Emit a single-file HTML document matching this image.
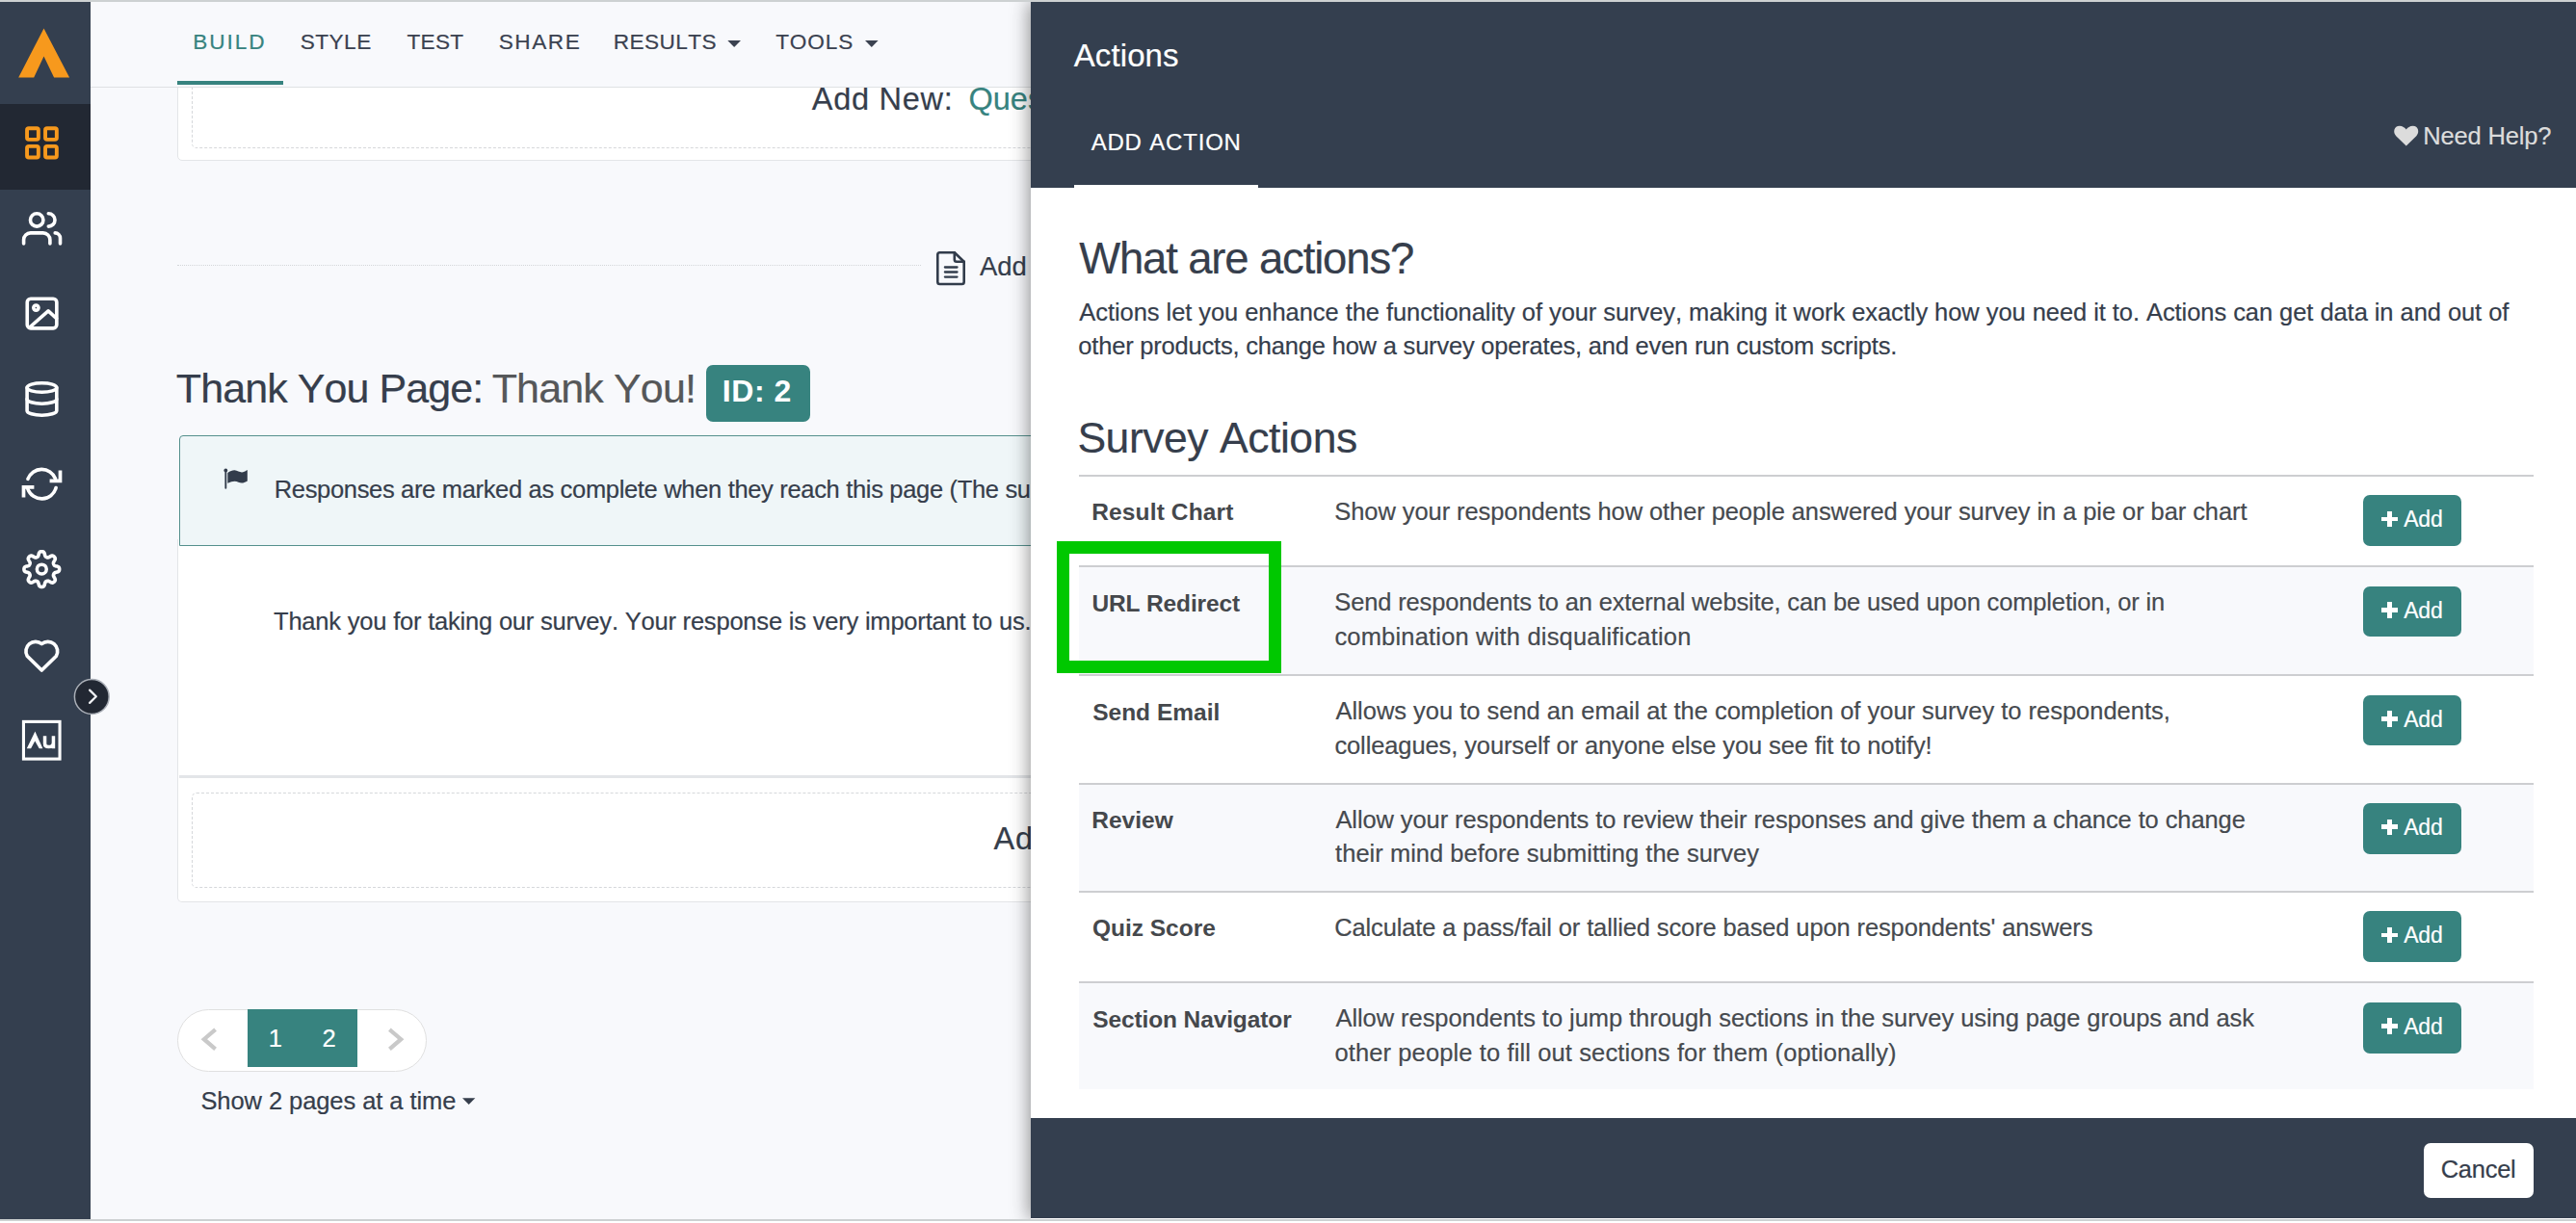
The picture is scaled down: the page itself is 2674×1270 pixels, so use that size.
<!DOCTYPE html>
<html><head><meta charset="utf-8"><style>
html,body{margin:0;padding:0}
body{width:2674px;height:1270px;position:relative;overflow:hidden;background:#f8f9fc;font-family:"Liberation Sans",sans-serif}
.t{position:absolute;white-space:nowrap;font-kerning:none}
</style></head><body>
<div style="position:absolute;left:184px;top:40px;width:1000px;height:127px;background:#fff;border:1.5px solid #e3e5e8;border-radius:5px;box-sizing:border-box"></div><div style="position:absolute;left:199px;top:40px;width:980px;height:114px;border:1.5px dashed #d6d8db;border-radius:5px;box-sizing:border-box"></div><div class="t" style="left:842.74px;top:84.03px;font-size:32.5px;line-height:39px;font-weight:400;color:#363e4c;letter-spacing:0.733px;-webkit-text-stroke:0.2px #363e4c;">Add New:</div><div class="t" style="left:1005.46px;top:84.03px;font-size:32.5px;line-height:39px;font-weight:400;color:#37837f;letter-spacing:0.000px;-webkit-text-stroke:0.2px #37837f;">Ques</div><div style="position:absolute;left:94px;top:2px;width:1000px;height:88px;background:#f8f9fc"></div><div style="position:absolute;left:94px;top:89.5px;width:1000px;height:1.5px;background:#dfe1e4"></div><div style="position:absolute;left:183.7px;top:83.6px;width:110.3px;height:4.7px;background:#37837f"></div><div class="t" style="left:200.15px;top:29.67px;font-size:22.6px;line-height:27px;font-weight:400;color:#37837f;letter-spacing:1.943px;-webkit-text-stroke:0.2px #37837f;">BUILD</div><div class="t" style="left:311.67px;top:29.67px;font-size:22.6px;line-height:27px;font-weight:400;color:#3b4250;letter-spacing:0.500px;-webkit-text-stroke:0.2px #3b4250;">STYLE</div><div class="t" style="left:422.39px;top:29.67px;font-size:22.6px;line-height:27px;font-weight:400;color:#3b4250;letter-spacing:0.323px;-webkit-text-stroke:0.2px #3b4250;">TEST</div><div class="t" style="left:517.77px;top:29.67px;font-size:22.6px;line-height:27px;font-weight:400;color:#3b4250;letter-spacing:1.533px;-webkit-text-stroke:0.2px #3b4250;">SHARE</div><div class="t" style="left:636.85px;top:29.67px;font-size:22.6px;line-height:27px;font-weight:400;color:#3b4250;letter-spacing:0.409px;-webkit-text-stroke:0.2px #3b4250;">RESULTS</div><div class="t" style="left:805.19px;top:29.67px;font-size:22.6px;line-height:27px;font-weight:400;color:#3b4250;letter-spacing:0.885px;-webkit-text-stroke:0.2px #3b4250;">TOOLS</div><svg style="position:absolute;left:0;top:0" width="1000" height="100"><polygon points="755.3,41.9 769,41.9 762.15,49" fill="#3b4250"/><polygon points="898,41.9 911.6,41.9 904.8,49" fill="#3b4250"/></svg><div style="position:absolute;left:184px;top:274.5px;width:772px;height:0;border-top:1.5px dotted #d4d6d9"></div><svg style="position:absolute;left:960px;top:250px" width="60" height="60" viewBox="960 250 60 60" fill="none" stroke="#323c4b" stroke-width="2.6" stroke-linejoin="round" stroke-linecap="round"><path d="M990.8 262.3 H975.5 Q973.3 262.3 973.3 264.5 V292.8 Q973.3 295 975.5 295 H998.5 Q1000.7 295 1000.7 292.8 V271.8 Z"/><path d="M990.8 262.3 V269.6 Q990.8 271.8 993 271.8 H1000.7"/><path d="M980.9 277.5 H993.5 M980.9 282.5 H993.5 M980.9 287.6 H993.5" stroke-width="2.3"/></svg><div class="t" style="left:1016.95px;top:259.97px;font-size:27.5px;line-height:33px;font-weight:400;color:#363e4c;letter-spacing:0.000px;-webkit-text-stroke:0.2px #363e4c;">Add</div><div class="t" style="left:182.83px;top:377.39px;font-size:43px;line-height:52px;font-weight:400;color:#363e4c;letter-spacing:-0.928px;-webkit-text-stroke:0.2px #363e4c;">Thank You Page:</div><div class="t" style="left:510.73px;top:377.39px;font-size:43px;line-height:52px;font-weight:400;color:#555759;letter-spacing:-0.860px;-webkit-text-stroke:0.2px #555759;">Thank You!</div><div style="position:absolute;left:732.5px;top:379.2px;width:108.2px;height:58.5px;background:#37837f;border-radius:7px"></div><div class="t" style="left:749.86px;top:387.41px;font-size:32px;line-height:38px;font-weight:700;color:#fff;letter-spacing:0.520px;">ID: 2</div><div style="position:absolute;left:184.3px;top:560px;width:1000px;height:376.5px;background:#fff;border:1.5px solid #e3e5e8;border-top:none;border-radius:0 0 5px 5px;box-sizing:border-box"></div><div style="position:absolute;left:186px;top:451.6px;width:1000px;height:115px;background:#eff6f8;border:1.3px solid #55908d;border-radius:4px 0 0 0;box-sizing:border-box"></div><svg style="position:absolute;left:225px;top:480px" width="40" height="35" viewBox="225 480 40 35"><rect x="233.4" y="488" width="1.85" height="19.7" rx="0.9" fill="#323c4b"/><circle cx="234.3" cy="488.4" r="1.9" fill="#323c4b"/><path d="M236.3 491 C239 489 241.5 488.2 243.5 488.3 C246.5 488.5 248.5 490.4 251 490.4 C253 490.4 255 489.3 256.8 488.1 L256.8 499.6 C255 500.8 253 501.6 251 501.6 C248.5 501.6 246.5 499.8 243.5 499.8 C241.5 499.8 239 500.6 236.3 501.7 Z" fill="#323c4b"/></svg><div class="t" style="left:284.71px;top:492.56px;font-size:25.5px;line-height:31px;font-weight:400;color:#363e4c;letter-spacing:-0.326px;-webkit-text-stroke:0.2px #363e4c;">Responses are marked as complete when they reach this page (The survey</div><div class="t" style="left:284.03px;top:630.46px;font-size:25.5px;line-height:31px;font-weight:400;color:#363e4c;letter-spacing:-0.203px;-webkit-text-stroke:0.2px #363e4c;">Thank you for taking our survey. Your response is very important to us.</div><div style="position:absolute;left:186px;top:805px;width:1000px;height:2.5px;background:#e3e5e8"></div><div style="position:absolute;left:198.5px;top:823.3px;width:1000px;height:99.1px;border:1.5px dashed #d6d8db;border-radius:5px;box-sizing:border-box"></div><div class="t" style="left:1031.54px;top:852.23px;font-size:32.5px;line-height:39px;font-weight:400;color:#363e4c;letter-spacing:0.733px;-webkit-text-stroke:0.2px #363e4c;">Add New:</div><div style="position:absolute;left:183.7px;top:1048.2px;width:259.7px;height:65.1px;background:#fff;border:1.5px solid #e0e0e0;border-radius:33px;box-sizing:border-box"></div><div style="position:absolute;left:257px;top:1048.4px;width:114px;height:59.6px;background:#37837f"></div><div class="t" style="left:278.76px;top:1062.66px;font-size:25.5px;line-height:31px;font-weight:400;color:#fff;letter-spacing:0.000px;-webkit-text-stroke:0.2px #fff;">1</div><div class="t" style="left:334.52px;top:1062.66px;font-size:25.5px;line-height:31px;font-weight:400;color:#fff;letter-spacing:0.000px;-webkit-text-stroke:0.2px #fff;">2</div><svg style="position:absolute;left:200px;top:1060px" width="230" height="40" viewBox="200 1060 230 40" fill="none" stroke="#c9c9c9" stroke-width="4.2" stroke-linecap="square"><path d="M222 1070.5 L211.8 1079.2 L222 1088"/><path d="M406 1070.5 L416.2 1079.2 L406 1088"/></svg><div class="t" style="left:208.44px;top:1127.96px;font-size:25.5px;line-height:31px;font-weight:400;color:#363e4c;letter-spacing:-0.076px;-webkit-text-stroke:0.2px #363e4c;">Show 2 pages at a time</div><svg style="position:absolute;left:478px;top:1138px" width="20" height="14"><polygon points="2,2.3 15.3,2.3 8.65,9" fill="#363e4c"/></svg><div style="position:absolute;left:0;top:2px;width:94px;height:1263.5px;background:#343f4f;overflow:hidden"><svg style="position:absolute;left:0;top:-2px" width="94" height="1270" viewBox="0 0 94 1270"><polygon points="45.5,29.4 72.1,80.4 56.1,80.4 45.5,58.6 35.2,80.4 19.2,80.4" fill="#f7991d"/><rect x="0" y="108" width="94" height="89" fill="#222833"/><g fill="none" stroke="#f7991d" stroke-width="3.9"><rect x="28.05" y="133.25" width="11.8" height="11.6" rx="1.8"/><rect x="47.05" y="133.25" width="11.8" height="11.6" rx="1.8"/><rect x="28.05" y="151.85" width="11.8" height="11.6" rx="1.8"/><rect x="47.05" y="151.85" width="11.8" height="11.6" rx="1.8"/></g><g fill="none" stroke="#fff" stroke-width="3.6" stroke-linecap="round" stroke-linejoin="round"><circle cx="38.2" cy="228.4" r="6.7"/><path d="M50.3 221.7 A6.7 6.7 0 0 1 50.3 235.1"/><path d="M24.6 252.9 V249 A7.1 7.1 0 0 1 31.7 241.9 H44.8 A7.1 7.1 0 0 1 51.9 249 V252.9"/><path d="M57.2 241.9 A5.3 5.3 0 0 1 62.5 247.2 V252.9"/><rect x="28.25" y="310.25" width="30.6" height="30.6" rx="3.6"/><path d="M31.3 339.5 L50.1 322.9 L58.6 330.6"/><circle cx="37.4" cy="319.6" r="2.6" stroke-width="3.6"/><ellipse cx="43.45" cy="402.5" rx="15.35" ry="4.8"/><path d="M28.1 402.5 V426.4 A15.35 4.8 0 0 0 58.8 426.4 V402.5"/><path d="M28.1 414.4 A15.35 4.8 0 0 0 58.8 414.4"/><path d="M28.92 497.37 A15.3 15.3 0 0 1 57.5 497.0"/><path d="M58.08 506.56 A15.3 15.3 0 0 1 28.92 507.83"/></g><g fill="none" stroke="#fff" stroke-width="3.7" stroke-linecap="butt" stroke-linejoin="miter"><path d="M51.6 499.3 H62.5 V488.4"/><path d="M35.4 505.9 H24.5 V516.6"/></g><polygon points="43.30,572.75 43.78,572.77 44.26,572.84 44.73,572.97 45.18,573.20 45.61,573.59 45.98,574.19 46.28,575.03 46.51,575.98 46.73,576.82 46.96,577.45 47.22,577.87 47.51,578.15 47.81,578.36 48.13,578.53 48.45,578.67 48.78,578.80 49.12,578.90 49.48,578.97 49.89,578.97 50.37,578.86 50.97,578.58 51.72,578.13 52.56,577.63 53.36,577.25 54.05,577.09 54.63,577.11 55.11,577.27 55.54,577.51 55.92,577.80 56.28,578.12 56.60,578.48 56.89,578.86 57.13,579.29 57.29,579.77 57.31,580.35 57.15,581.04 56.77,581.84 56.27,582.68 55.82,583.43 55.54,584.03 55.43,584.51 55.43,584.92 55.50,585.28 55.60,585.62 55.73,585.95 55.87,586.27 56.04,586.59 56.25,586.89 56.53,587.18 56.95,587.44 57.58,587.67 58.42,587.89 59.37,588.12 60.21,588.42 60.81,588.79 61.20,589.22 61.43,589.67 61.56,590.14 61.63,590.62 61.65,591.10 61.63,591.58 61.56,592.06 61.43,592.53 61.20,592.98 60.81,593.41 60.21,593.78 59.37,594.08 58.42,594.31 57.58,594.53 56.95,594.76 56.53,595.02 56.25,595.31 56.04,595.61 55.87,595.93 55.73,596.25 55.60,596.58 55.50,596.92 55.43,597.28 55.43,597.69 55.54,598.17 55.82,598.77 56.27,599.52 56.77,600.36 57.15,601.16 57.31,601.85 57.29,602.43 57.13,602.91 56.89,603.34 56.60,603.72 56.28,604.08 55.92,604.40 55.54,604.69 55.11,604.93 54.63,605.09 54.05,605.11 53.36,604.95 52.56,604.57 51.72,604.07 50.97,603.62 50.37,603.34 49.89,603.23 49.48,603.23 49.12,603.30 48.78,603.40 48.45,603.53 48.13,603.67 47.81,603.84 47.51,604.05 47.22,604.33 46.96,604.75 46.73,605.38 46.51,606.22 46.28,607.17 45.98,608.01 45.61,608.61 45.18,609.00 44.73,609.23 44.26,609.36 43.78,609.43 43.30,609.45 42.82,609.43 42.34,609.36 41.87,609.23 41.42,609.00 40.99,608.61 40.62,608.01 40.32,607.17 40.09,606.22 39.87,605.38 39.64,604.75 39.38,604.33 39.09,604.05 38.79,603.84 38.47,603.67 38.15,603.53 37.82,603.40 37.48,603.30 37.12,603.23 36.71,603.23 36.23,603.34 35.63,603.62 34.88,604.07 34.04,604.57 33.24,604.95 32.55,605.11 31.97,605.09 31.49,604.93 31.06,604.69 30.68,604.40 30.32,604.08 30.00,603.72 29.71,603.34 29.47,602.91 29.31,602.43 29.29,601.85 29.45,601.16 29.83,600.36 30.33,599.52 30.78,598.77 31.06,598.17 31.17,597.69 31.17,597.28 31.10,596.92 31.00,596.58 30.87,596.25 30.73,595.93 30.56,595.61 30.35,595.31 30.07,595.02 29.65,594.76 29.02,594.53 28.18,594.31 27.23,594.08 26.39,593.78 25.79,593.41 25.40,592.98 25.17,592.53 25.04,592.06 24.97,591.58 24.95,591.10 24.97,590.62 25.04,590.14 25.17,589.67 25.40,589.22 25.79,588.79 26.39,588.42 27.23,588.12 28.18,587.89 29.02,587.67 29.65,587.44 30.07,587.18 30.35,586.89 30.56,586.59 30.73,586.27 30.87,585.95 31.00,585.62 31.10,585.28 31.17,584.92 31.17,584.51 31.06,584.03 30.78,583.43 30.33,582.68 29.83,581.84 29.45,581.04 29.29,580.35 29.31,579.77 29.47,579.29 29.71,578.86 30.00,578.48 30.32,578.12 30.68,577.80 31.06,577.51 31.49,577.27 31.97,577.11 32.55,577.09 33.24,577.25 34.04,577.63 34.88,578.13 35.63,578.58 36.23,578.86 36.71,578.97 37.12,578.97 37.48,578.90 37.82,578.80 38.15,578.67 38.47,578.53 38.79,578.36 39.09,578.15 39.38,577.87 39.64,577.45 39.87,576.82 40.09,575.98 40.32,575.03 40.62,574.19 40.99,573.59 41.42,573.20 41.87,572.97 42.34,572.84 42.82,572.77 43.30,572.75" fill="none" stroke="#fff" stroke-width="3.6" stroke-linejoin="round"/><circle cx="43.3" cy="591.1" r="4.95" fill="none" stroke="#fff" stroke-width="3.5"/><path d="M43.3 696 L28.2 681.2 A10 10 0 0 1 43.3 668.6 A10 10 0 0 1 58.4 681.2 Z" fill="none" stroke="#fff" stroke-width="3.7" stroke-linejoin="round"/><rect x="24.45" y="749.4" width="37.6" height="38.7" fill="none" stroke="#fff" stroke-width="3.1"/><polygon points="36.4,759.6 44.4,777.2 40.7,777.2 36.3,769.6 32.1,777.2 27.8,777.2" fill="#fff"/><path d="M46.55 764.3 V772.2 Q46.55 775.6 50.4 775.6 Q55.45 775.6 55.45 771 V764.3 M55.45 770 V777.2" fill="none" stroke="#fff" stroke-width="3.5"/></svg></div><svg style="position:absolute;left:70px;top:698px" width="50" height="52" viewBox="70 698 50 52"><circle cx="95.3" cy="723.5" r="17.9" fill="#222833" stroke="#a9aeb6" stroke-width="1.5"/><path d="M93.1 716.6 L99.8 723.3 L93.1 729.9" fill="none" stroke="#eef0f3" stroke-width="2.3" stroke-linecap="round" stroke-linejoin="round"/></svg><div style="position:absolute;left:1070px;top:2px;width:1604px;height:1263.5px;background:#fff;box-shadow:-2px 0 18px rgba(0,0,0,0.42)"></div><div style="position:absolute;left:1070px;top:2px;width:1604px;height:192.8px;background:#343f4f"></div><div class="t" style="left:1114.64px;top:37.96px;font-size:33px;line-height:40px;font-weight:400;color:#fff;letter-spacing:0.123px;-webkit-text-stroke:0.2px #fff;">Actions</div><div class="t" style="left:1132.65px;top:133.18px;font-size:24px;line-height:29px;font-weight:400;color:#fff;letter-spacing:0.811px;-webkit-text-stroke:0.2px #fff;">ADD ACTION</div><div style="position:absolute;left:1114.7px;top:191.7px;width:191.6px;height:3.1px;background:#fff"></div><svg style="position:absolute;left:2480px;top:125px" width="36" height="32" viewBox="2480 125 36 32"><path d="M2497.75 151.4 L2487.2 141.2 C2483.5 137.4 2485.2 130.8 2490.8 130.8 C2494 130.8 2496.3 132.6 2497.75 134.6 C2499.2 132.6 2501.5 130.8 2504.7 130.8 C2510.3 130.8 2512 137.4 2508.3 141.2 Z" fill="#dcdcdc"/></svg><div class="t" style="left:2515.21px;top:125.66px;font-size:25.5px;line-height:31px;font-weight:400;color:#dcdcdc;letter-spacing:-0.148px;-webkit-text-stroke:0.2px #dcdcdc;">Need Help?</div><div class="t" style="left:1120.20px;top:241.03px;font-size:45.5px;line-height:55px;font-weight:400;color:#363e4c;letter-spacing:-1.164px;-webkit-text-stroke:0.2px #363e4c;">What are actions?</div><div class="t" style="left:1120.35px;top:309.06px;font-size:25.5px;line-height:31px;font-weight:400;color:#363e4c;letter-spacing:-0.064px;-webkit-text-stroke:0.2px #363e4c;">Actions let you enhance the functionality of your survey, making it work exactly how you need it to. Actions can get data in and out of</div><div class="t" style="left:1119.33px;top:344.06px;font-size:25.5px;line-height:31px;font-weight:400;color:#363e4c;letter-spacing:-0.200px;-webkit-text-stroke:0.2px #363e4c;">other products, change how a survey operates, and even run custom scripts.</div><div class="t" style="left:1118.38px;top:428.07px;font-size:44.5px;line-height:53px;font-weight:400;color:#363e4c;letter-spacing:-0.459px;-webkit-text-stroke:0.2px #363e4c;">Survey Actions</div><div style="position:absolute;left:1120px;top:492.6px;width:1510px;height:95.3px;background:#fff;border-top:2px solid #cdced1;box-sizing:border-box"></div><div class="t" style="left:1133.26px;top:517.11px;font-size:24.5px;line-height:29px;font-weight:700;color:#45484c;letter-spacing:0.134px;">Result Chart</div><div class="t" style="left:1385.34px;top:515.76px;font-size:25.5px;line-height:31px;font-weight:400;color:#464a4f;letter-spacing:-0.085px;-webkit-text-stroke:0.2px #464a4f;">Show your respondents how other people answered your survey in a pie or bar chart</div><div style="position:absolute;left:2452.9px;top:514.0px;width:101.9px;height:52.9px;background:#37837f;border-radius:7px"></div><div style="position:absolute;left:2472.3px;top:536.5px;width:17.2px;height:4.9px;background:#fff"></div><div style="position:absolute;left:2478.45px;top:530.6px;width:4.9px;height:16.8px;background:#fff"></div><div class="t" style="left:2495.16px;top:525.43px;font-size:23px;line-height:28px;font-weight:400;color:#fff;letter-spacing:-0.198px;-webkit-text-stroke:0.2px #fff;">Add</div><div style="position:absolute;left:1120px;top:587.2px;width:1510px;height:113.6px;background:#f8f9fc;border-top:2px solid #cdced1;box-sizing:border-box"></div><div class="t" style="left:1133.43px;top:611.71px;font-size:24.5px;line-height:29px;font-weight:700;color:#45484c;letter-spacing:-0.139px;">URL Redirect</div><div class="t" style="left:1385.34px;top:610.36px;font-size:25.5px;line-height:31px;font-weight:400;color:#464a4f;letter-spacing:-0.153px;-webkit-text-stroke:0.2px #464a4f;">Send respondents to an external website, can be used upon completion, or in</div><div class="t" style="left:1385.42px;top:645.66px;font-size:25.5px;line-height:31px;font-weight:400;color:#464a4f;letter-spacing:0.177px;-webkit-text-stroke:0.2px #464a4f;">combination with disqualification</div><div style="position:absolute;left:2452.9px;top:608.6px;width:101.9px;height:52.9px;background:#37837f;border-radius:7px"></div><div style="position:absolute;left:2472.3px;top:631.1px;width:17.2px;height:4.9px;background:#fff"></div><div style="position:absolute;left:2478.45px;top:625.2px;width:4.9px;height:16.8px;background:#fff"></div><div class="t" style="left:2495.16px;top:620.03px;font-size:23px;line-height:28px;font-weight:400;color:#fff;letter-spacing:-0.198px;-webkit-text-stroke:0.2px #fff;">Add</div><div style="position:absolute;left:1120px;top:700.1px;width:1510px;height:113.1px;background:#fff;border-top:2px solid #cdced1;box-sizing:border-box"></div><div class="t" style="left:1134.19px;top:724.61px;font-size:24.5px;line-height:29px;font-weight:700;color:#45484c;letter-spacing:0.000px;">Send Email</div><div class="t" style="left:1386.45px;top:723.26px;font-size:25.5px;line-height:31px;font-weight:400;color:#464a4f;letter-spacing:-0.015px;-webkit-text-stroke:0.2px #464a4f;">Allows you to send an email at the completion of your survey to respondents,</div><div class="t" style="left:1385.42px;top:758.56px;font-size:25.5px;line-height:31px;font-weight:400;color:#464a4f;letter-spacing:-0.111px;-webkit-text-stroke:0.2px #464a4f;">colleagues, yourself or anyone else you see fit to notify!</div><div style="position:absolute;left:2452.9px;top:721.5px;width:101.9px;height:52.9px;background:#37837f;border-radius:7px"></div><div style="position:absolute;left:2472.3px;top:744.0px;width:17.2px;height:4.9px;background:#fff"></div><div style="position:absolute;left:2478.45px;top:738.1px;width:4.9px;height:16.8px;background:#fff"></div><div class="t" style="left:2495.16px;top:732.93px;font-size:23px;line-height:28px;font-weight:400;color:#fff;letter-spacing:-0.198px;-webkit-text-stroke:0.2px #fff;">Add</div><div style="position:absolute;left:1120px;top:812.5px;width:1510px;height:112.8px;background:#f8f9fc;border-top:2px solid #cdced1;box-sizing:border-box"></div><div class="t" style="left:1133.26px;top:837.01px;font-size:24.5px;line-height:29px;font-weight:700;color:#45484c;letter-spacing:0.000px;">Review</div><div class="t" style="left:1386.45px;top:835.66px;font-size:25.5px;line-height:31px;font-weight:400;color:#464a4f;letter-spacing:-0.102px;-webkit-text-stroke:0.2px #464a4f;">Allow your respondents to review their responses and give them a chance to change</div><div class="t" style="left:1386.11px;top:870.96px;font-size:25.5px;line-height:31px;font-weight:400;color:#464a4f;letter-spacing:0.015px;-webkit-text-stroke:0.2px #464a4f;">their mind before submitting the survey</div><div style="position:absolute;left:2452.9px;top:833.9px;width:101.9px;height:52.9px;background:#37837f;border-radius:7px"></div><div style="position:absolute;left:2472.3px;top:856.4px;width:17.2px;height:4.9px;background:#fff"></div><div style="position:absolute;left:2478.45px;top:850.5px;width:4.9px;height:16.8px;background:#fff"></div><div class="t" style="left:2495.16px;top:845.33px;font-size:23px;line-height:28px;font-weight:400;color:#fff;letter-spacing:-0.198px;-webkit-text-stroke:0.2px #fff;">Add</div><div style="position:absolute;left:1120px;top:924.6px;width:1510px;height:95.4px;background:#fff;border-top:2px solid #cdced1;box-sizing:border-box"></div><div class="t" style="left:1133.90px;top:949.11px;font-size:24.5px;line-height:29px;font-weight:700;color:#45484c;letter-spacing:0.000px;">Quiz Score</div><div class="t" style="left:1385.21px;top:947.76px;font-size:25.5px;line-height:31px;font-weight:400;color:#464a4f;letter-spacing:-0.125px;-webkit-text-stroke:0.2px #464a4f;">Calculate a pass/fail or tallied score based upon respondents' answers</div><div style="position:absolute;left:2452.9px;top:946.0px;width:101.9px;height:52.9px;background:#37837f;border-radius:7px"></div><div style="position:absolute;left:2472.3px;top:968.5px;width:17.2px;height:4.9px;background:#fff"></div><div style="position:absolute;left:2478.45px;top:962.6px;width:4.9px;height:16.8px;background:#fff"></div><div class="t" style="left:2495.16px;top:957.43px;font-size:23px;line-height:28px;font-weight:400;color:#fff;letter-spacing:-0.198px;-webkit-text-stroke:0.2px #fff;">Add</div><div style="position:absolute;left:1120px;top:1019.3px;width:1510px;height:111.3px;background:#f8f9fc;border-top:2px solid #cdced1;box-sizing:border-box"></div><div class="t" style="left:1134.19px;top:1043.81px;font-size:24.5px;line-height:29px;font-weight:700;color:#45484c;letter-spacing:-0.114px;">Section Navigator</div><div class="t" style="left:1386.45px;top:1042.46px;font-size:25.5px;line-height:31px;font-weight:400;color:#464a4f;letter-spacing:-0.058px;-webkit-text-stroke:0.2px #464a4f;">Allow respondents to jump through sections in the survey using page groups and ask</div><div class="t" style="left:1385.43px;top:1077.76px;font-size:25.5px;line-height:31px;font-weight:400;color:#464a4f;letter-spacing:0.116px;-webkit-text-stroke:0.2px #464a4f;">other people to fill out sections for them (optionally)</div><div style="position:absolute;left:2452.9px;top:1040.7px;width:101.9px;height:52.9px;background:#37837f;border-radius:7px"></div><div style="position:absolute;left:2472.3px;top:1063.2px;width:17.2px;height:4.9px;background:#fff"></div><div style="position:absolute;left:2478.45px;top:1057.3px;width:4.9px;height:16.8px;background:#fff"></div><div class="t" style="left:2495.16px;top:1052.13px;font-size:23px;line-height:28px;font-weight:400;color:#fff;letter-spacing:-0.198px;-webkit-text-stroke:0.2px #fff;">Add</div><div style="position:absolute;left:1097px;top:562px;width:233px;height:137px;border:13px solid #00c800;box-sizing:border-box"></div><div style="position:absolute;left:1070px;top:1160.7px;width:1604px;height:104.8px;background:#343f4f"></div><div style="position:absolute;left:2515.7px;top:1187.2px;width:113.9px;height:56.4px;background:#fff;border-radius:7px"></div><div class="t" style="left:2533.71px;top:1198.66px;font-size:25.5px;line-height:31px;font-weight:400;color:#363e4c;letter-spacing:-0.275px;-webkit-text-stroke:0.2px #363e4c;">Cancel</div>
<div style="position:absolute;left:0;top:0;width:2674px;height:2px;background:#cdd1d2"></div>
<div style="position:absolute;left:0;top:1265.5px;width:2674px;height:2.5px;background:#cdd1d2"></div>
<div style="position:absolute;left:0;top:1268px;width:2674px;height:2px;background:#fff"></div>
</body></html>
